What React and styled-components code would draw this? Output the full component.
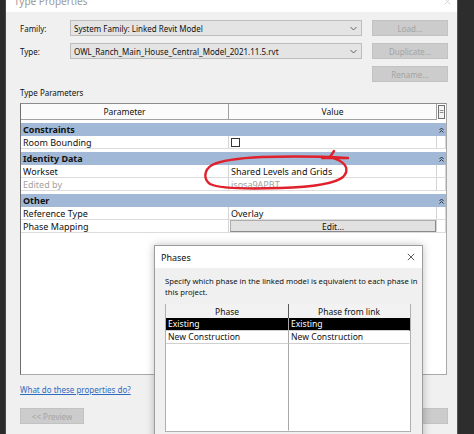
import React from 'react';
import styled, { createGlobalStyle } from 'styled-components';

const Global = createGlobalStyle`
  html, body { margin: 0; padding: 0; background: #2b2b2b; overflow: hidden; }
  body { font-family: "Noto Sans", "Open Sans", sans-serif; }
  * { box-sizing: border-box; }
`;

const Screen = styled.div`
  position: relative;
  display: flex;
  width: 474px;
  height: 434px;
  overflow: hidden;
  background: #2d2d2d;
`;

const LeftEdge = styled.div`
  flex: none;
  width: 6px;
  background: #2b2b2b;
  border-right: 1px solid #4a4a4a;
`;

const RightEdge = styled.div`
  flex: 1;
  min-width: 0;
  background: #2d2d2d;
  border-left: 1px solid #555;
`;

const Dialog = styled.div`
  flex: none;
  width: 451px;
  display: flex;
  flex-direction: column;
  background: #f0f0f0;
`;

const TitleBar = styled.div`
  height: 12px;
  background: #fff;
  display: flex;
  justify-content: space-between;
  padding: 0 6px 0 8px;
  overflow: hidden;
`;

const TitleText = styled.div`
  margin-top: -5px;
  font-size: 10px;
  line-height: 13px;
  color: #9a9a9a;
`;

const Body = styled.div`
  flex: 1;
  display: flex;
  flex-direction: column;
  padding: 8px 0 0 14px;
`;

const FieldRow = styled.div`
  display: flex;
  align-items: center;
  width: 428px;
  height: 16px;
  margin-bottom: 7px;
  justify-content: ${p => (p.end ? 'flex-end' : 'flex-start')};
`;

const Label = styled.div`
  width: 50px;
  flex: none;
  font-size: 8px;
  color: #111;
`;

const Combo = styled.div`
  flex: none;
  width: 292px;
  height: 16px;
  margin-right: 10px;
  background: #e4e4e4;
  border: 1px solid #bcbcbc;
  display: flex;
  align-items: center;
  justify-content: space-between;
  padding: 0 4px 0 3px;
  font-size: 8px;
  color: #111;
`;

const Btn = styled.div`
  flex: none;
  width: ${p => p.w || 76}px;
  height: 16px;
  background: #cccccc;
  border: 1px solid #c2c2c2;
  display: flex;
  align-items: center;
  justify-content: center;
  font-size: 8px;
  color: #a4a4a4;
  margin-left: ${p => (p.push ? 'auto' : '0')};
`;

const SectionLabel = styled.div`
  font-size: 8px;
  line-height: 10px;
  margin: -1px 0 5px;
  color: #111;
`;

const Table = styled.div`
  width: 427px;
  height: 272px;
  background: #fff;
  border: 1px solid #a9a9a9;
  border-left-color: #6e6e6e;
  border-top-color: #8c8c8c;
`;

const Row = styled.div`
  display: grid;
  grid-template-columns: 208px 208px 1fr;
  height: ${p => p.h || 13}px;
  margin-top: ${p => p.gap || 0}px;
`;

const HeadCell = styled.div`
  display: flex;
  align-items: center;
  justify-content: center;
  font-size: 8.5px;
  color: #111;
  background: #fbfbfb;
  border-right: 1px solid #a0a0a0;
  border-bottom: 1px solid #a0a0a0;
`;

const EqBox = styled.div`
  margin: 1px;
  border: 1px solid #707070;
  display: flex;
  align-items: center;
  justify-content: center;
  font-size: 8px;
  line-height: 1;
  color: #333;
  background: #f4f4f4;
`;

const GroupCell = styled.div`
  grid-column: ${p => (p.span ? 'span 2' : 'auto')};
  background: #a1b9d6;
  font-size: 9px;
  font-weight: 700;
  color: #111;
  display: flex;
  align-items: center;
  justify-content: ${p => (p.span ? 'flex-start' : 'center')};
  padding-left: ${p => (p.span ? '2px' : '0')};
`;

const Cell = styled.div`
  font-size: 9px;
  color: ${p => (p.muted ? '#a2a2a2' : '#111')};
  border-bottom: 1px solid #dcdcdc;
  border-right: 1px solid #d4d4d4;
  display: flex;
  align-items: center;
  padding-left: 2px;
  white-space: nowrap;
  overflow: hidden;
`;

const CheckBox = styled.div`
  width: 9px;
  height: 9px;
  border: 1px solid #333;
  background: #fff;
`;

const EditBtn = styled.div`
  flex: 1;
  height: 12px;
  margin-left: -1px;
  background: #e1e1e1;
  border: 1px solid #adadad;
  border-bottom-color: #8a8a8a;
  border-right-color: #8a8a8a;
  display: flex;
  align-items: center;
  justify-content: center;
  font-size: 8.5px;
  color: #111;
`;

const HelpLink = styled.div`
  margin-top: 10px;
  font-size: 8px;
  line-height: 10px;
  color: #2f6bbf;
  text-decoration: underline;
`;

const BottomRow = styled.div`
  display: flex;
  width: 428px;
  margin-top: 13px;
`;

const Phases = styled.div`
  position: absolute;
  left: 154px;
  top: 245px;
  width: 269px;
  height: 200px;
  background: #f0f0f0;
  border: 1px solid #9c9c9c;
  box-shadow: 0 0 8px rgba(0, 0, 0, 0.25);
  display: flex;
  flex-direction: column;
`;

const PhaseTitle = styled.div`
  height: 22px;
  background: #fff;
  display: flex;
  align-items: center;
  justify-content: space-between;
  padding: 0 7px 0 6px;
  font-size: 9px;
  color: #111;
`;

const PhaseBody = styled.div`
  padding: 8px 11px 0 10px;
`;

const Desc = styled.div`
  font-size: 7.7px;
  line-height: 11px;
  color: #111;
  white-space: nowrap;
`;

const PhaseTable = styled.div`
  margin-top: 6px;
  width: 246px;
  height: 128px;
  background: #fff;
  border: 1px solid #b0b0b0;
  border-top: none;
  display: grid;
  grid-template-columns: 123px 1fr;
  grid-template-rows: 14px 13px 13px 1fr;
`;

const PhHead = styled.div`
  background: #f2f2f2;
  border-right: 1px solid ${p => (p.last ? 'transparent' : '#5a5a5a')};
  display: flex;
  align-items: center;
  justify-content: center;
  font-size: 8.5px;
  color: #111;
`;

const PhCell = styled.div`
  background: ${p => (p.sel ? '#000' : '#fff')};
  color: ${p => (p.sel ? '#fff' : '#111')};
  border-right: 1px solid ${p => (p.last ? 'transparent' : '#a8a8a8')};
  border-bottom: 1px solid ${p => (p.fill ? 'transparent' : '#cfcfcf')};
  font-size: 8.6px;
  display: flex;
  align-items: center;
  padding-left: 2px;
`;

const Annotation = styled.svg`
  position: absolute;
  left: 0;
  top: 0;
  pointer-events: none;
`;

const CloseWrap = styled.div`
  margin-top: ${p => p.top || 0}px;
  display: flex;
`;

const Chevron = () => (
  <svg width="7" height="5" viewBox="0 0 7 5">
    <path d="M0.5 1 L3.5 4 L6.5 1" fill="none" stroke="#555" strokeWidth="0.9" />
  </svg>
);

const CloseX = ({ size = 7, color = '#bbb' }) => (
  <svg width={size} height={size} viewBox="0 0 10 10">
    <path d="M1 1 L9 9 M9 1 L1 9" stroke={color} strokeWidth="1" />
  </svg>
);

const Collapse = () => (
  <svg width="5" height="6" viewBox="0 0 5 6">
    <path d="M0.5 3 L2.5 1 L4.5 3 M0.5 5.5 L2.5 3.5 L4.5 5.5" fill="none" stroke="#222" strokeWidth="0.9" />
  </svg>
);

const groups = [
  { name: 'Constraints', rows: [{ p: 'Room Bounding', v: 'check' }] },
  {
    name: 'Identity Data',
    rows: [
      { p: 'Workset', v: 'Shared Levels and Grids' },
      { p: 'Edited by', v: 'isosa9APBT', muted: true },
    ],
  },
  {
    name: 'Other',
    rows: [
      { p: 'Reference Type', v: 'Overlay' },
      { p: 'Phase Mapping', v: 'edit' },
    ],
  },
];

const renderValue = r => {
  if (r.v === 'check') return <CheckBox />;
  if (r.v === 'edit') return <EditBtn>Edit...</EditBtn>;
  return r.v;
};

export default function App() {
  return (
    <Screen>
      <Global />
      <LeftEdge />
      <Dialog>
        <TitleBar>
          <TitleText>Type Properties</TitleText>
          <CloseWrap top={-2}>
            <CloseX size={7} color="#c4c4c4" />
          </CloseWrap>
        </TitleBar>
        <Body>
          <FieldRow>
            <Label>Family:</Label>
            <Combo>
              System Family: Linked Revit Model
              <Chevron />
            </Combo>
            <Btn>Load...</Btn>
          </FieldRow>
          <FieldRow>
            <Label>Type:</Label>
            <Combo>
              OWL_Ranch_Main_House_Central_Model_2021.11.5.rvt
              <Chevron />
            </Combo>
            <Btn>Duplicate...</Btn>
          </FieldRow>
          <FieldRow end>
            <Btn>Rename...</Btn>
          </FieldRow>
          <SectionLabel>Type Parameters</SectionLabel>
          <Table>
            <Row h={16}>
              <HeadCell>Parameter</HeadCell>
              <HeadCell>Value</HeadCell>
              <EqBox>=</EqBox>
            </Row>
            {groups.map(g => (
              <React.Fragment key={g.name}>
                <Row gap={3}>
                  <GroupCell span>{g.name}</GroupCell>
                  <GroupCell>
                    <Collapse />
                  </GroupCell>
                </Row>
                {g.rows.map(r => (
                  <Row key={r.p}>
                    <Cell muted={r.muted}>{r.p}</Cell>
                    <Cell muted={r.muted}>{renderValue(r)}</Cell>
                    <Cell />
                  </Row>
                ))}
              </React.Fragment>
            ))}
          </Table>
          <HelpLink>What do these properties do?</HelpLink>
          <BottomRow>
            <Btn w={64}>&lt;&lt; Preview</Btn>
            <Btn push>Apply</Btn>
          </BottomRow>
        </Body>
      </Dialog>
      <RightEdge />

      <Annotation width="474" height="434" viewBox="0 0 474 434">
        <path
          d="M347 158 C330 157 300 156 262 157 C240 158 222 160 212 165 C204 170 203 179 210 184 C220 189 250 189 280 188 C310 187 335 184 343 177 C349 171 347 164 338 160 L330 157 L334 151 M322 158 L348 158"
          fill="none"
          stroke="#e0202a"
          strokeWidth="2.4"
          strokeLinecap="round"
          strokeLinejoin="round"
        />
      </Annotation>

      <Phases>
        <PhaseTitle>
          Phases
          <CloseX size={8} color="#333" />
        </PhaseTitle>
        <PhaseBody>
          <Desc>Specify which phase in the linked model is equivalent to each phase in</Desc>
          <Desc>this project.</Desc>
          <PhaseTable>
            <PhHead>Phase</PhHead>
            <PhHead last>Phase from link</PhHead>
            <PhCell sel>Existing</PhCell>
            <PhCell sel last>Existing</PhCell>
            <PhCell>New Construction</PhCell>
            <PhCell last>New Construction</PhCell>
            <PhCell fill />
            <PhCell fill last />
          </PhaseTable>
        </PhaseBody>
      </Phases>
    </Screen>
  );
}
